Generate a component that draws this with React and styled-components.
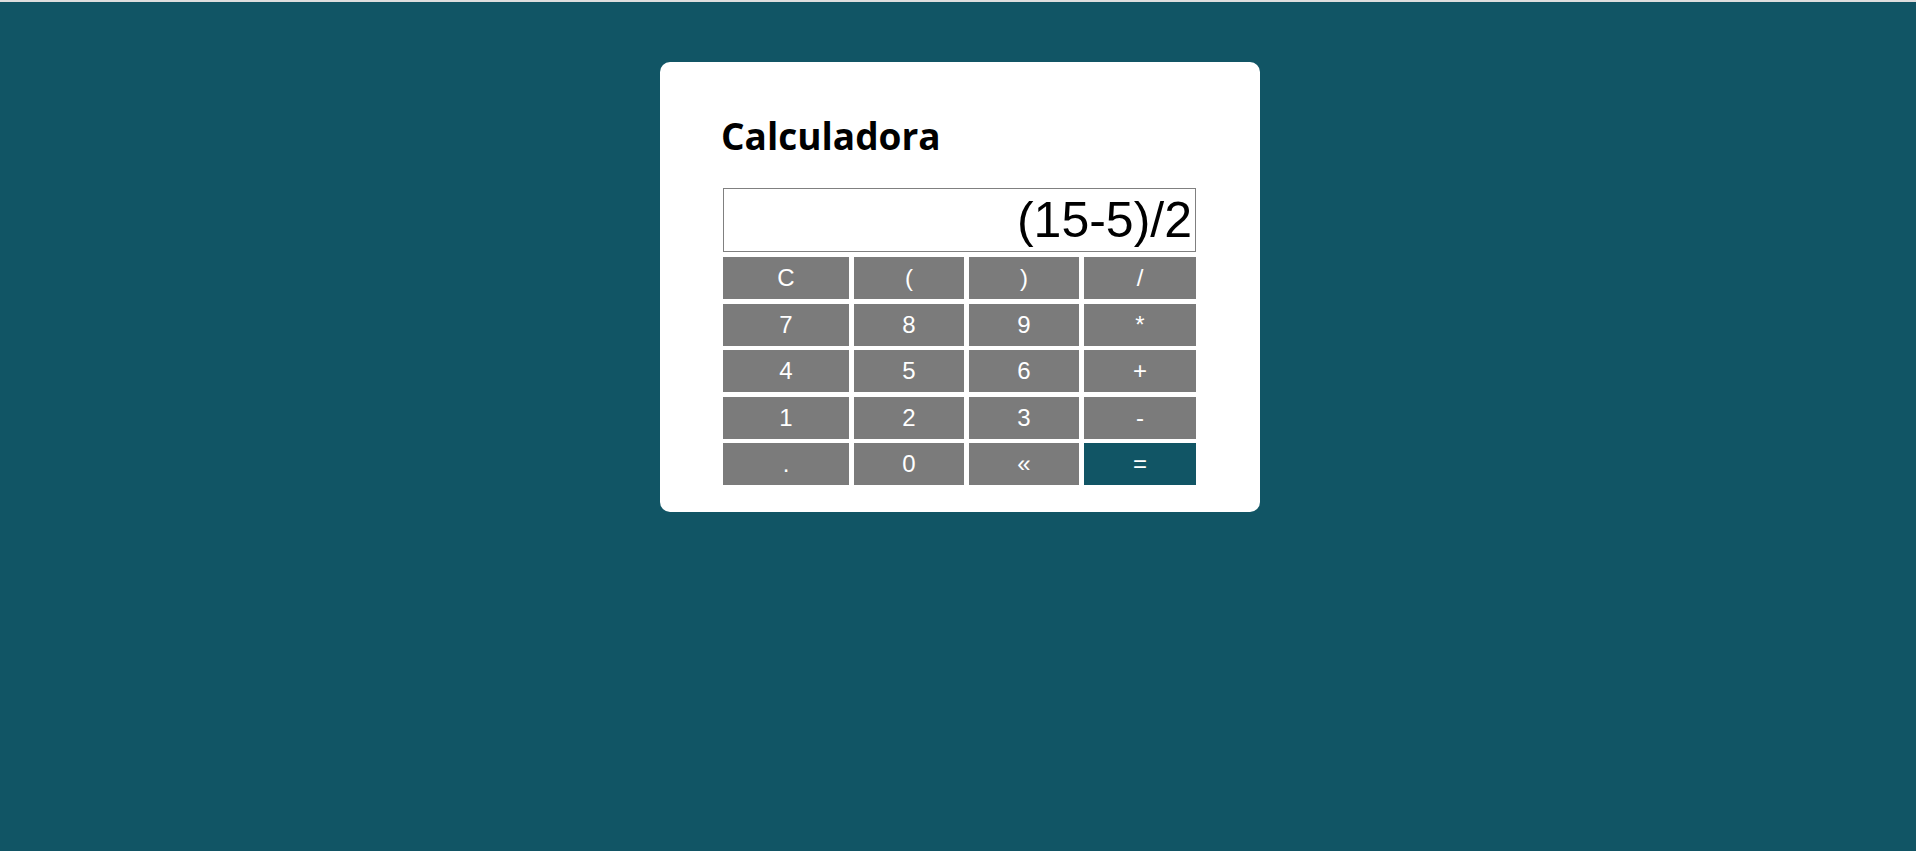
import React, { useState } from "react";
import styled, { createGlobalStyle } from "styled-components";

const GlobalStyle = createGlobalStyle`
  html, body {
    margin: 0;
    padding: 0;
  }
  body {
    min-height: 100vh;
    background-color: #115565;
    border-top: 2px solid #dedede;
    box-sizing: border-box;
    font-family: "Liberation Sans", Arial, sans-serif;
  }
`;

const Page = styled.div`
  display: flex;
  justify-content: center;
  padding-top: 60px;
  padding-left: 4px;
`;

const Card = styled.div`
  width: 600px;
  box-sizing: border-box;
  background-color: #ffffff;
  border-radius: 10px;
  padding: 48px 64px 27px 63px;
`;

const Title = styled.h1`
  margin: 0 0 27px -2px;
  font-family: "Open Sans", sans-serif;
  font-size: 37px;
  font-weight: 700;
  color: #000;
`;

const Display = styled.input`
  display: block;
  width: 100%;
  height: 64px;
  box-sizing: border-box;
  border: 1px solid #808080;
  padding: 0 3px 0 4px;
  margin: 0 0 5px 0;
  font-family: "Liberation Sans", Arial, sans-serif;
  font-size: 50px;
  text-align: right;
  color: #000;
  outline: none;
`;

const Keypad = styled.div`
  display: grid;
  grid-template-columns: 126px 110px 110px 112px;
  grid-auto-rows: 42px;
  column-gap: 5px;
  row-gap: 4.5px;
`;

const Key = styled.button`
  border: none;
  margin: 0;
  padding: 0;
  background-color: ${(p) => (p.$accent ? "#115565" : "#7b7b7b")};
  color: #ffffff;
  font-family: "Liberation Sans", Arial, sans-serif;
  font-size: 24px;
  cursor: pointer;
  &:hover {
    opacity: 0.9;
  }
`;

const keys = [
  "C", "(", ")", "/",
  "7", "8", "9", "*",
  "4", "5", "6", "+",
  "1", "2", "3", "-",
  ".", "0", "«", "=",
];

const App = () => {
  const [value, setValue] = useState("(15-5)/2");

  const press = (k) => {
    if (k === "C") setValue("");
    else if (k === "«") setValue((v) => v.slice(0, -1));
    else if (k === "=") {
      try {
        // eslint-disable-next-line no-new-func
        setValue(String(Function(`return (${value})`)()));
      } catch (e) {
        setValue("Erro");
      }
    } else setValue((v) => v + k);
  };

  return (
    <>
      <GlobalStyle />
      <Page>
        <Card>
          <Title>Calculadora</Title>
          <Display value={value} onChange={(e) => setValue(e.target.value)} />
          <Keypad>
            {keys.map((k) => (
              <Key key={k} $accent={k === "="} onClick={() => press(k)}>
                {k}
              </Key>
            ))}
          </Keypad>
        </Card>
      </Page>
    </>
  );
};

export default App;
